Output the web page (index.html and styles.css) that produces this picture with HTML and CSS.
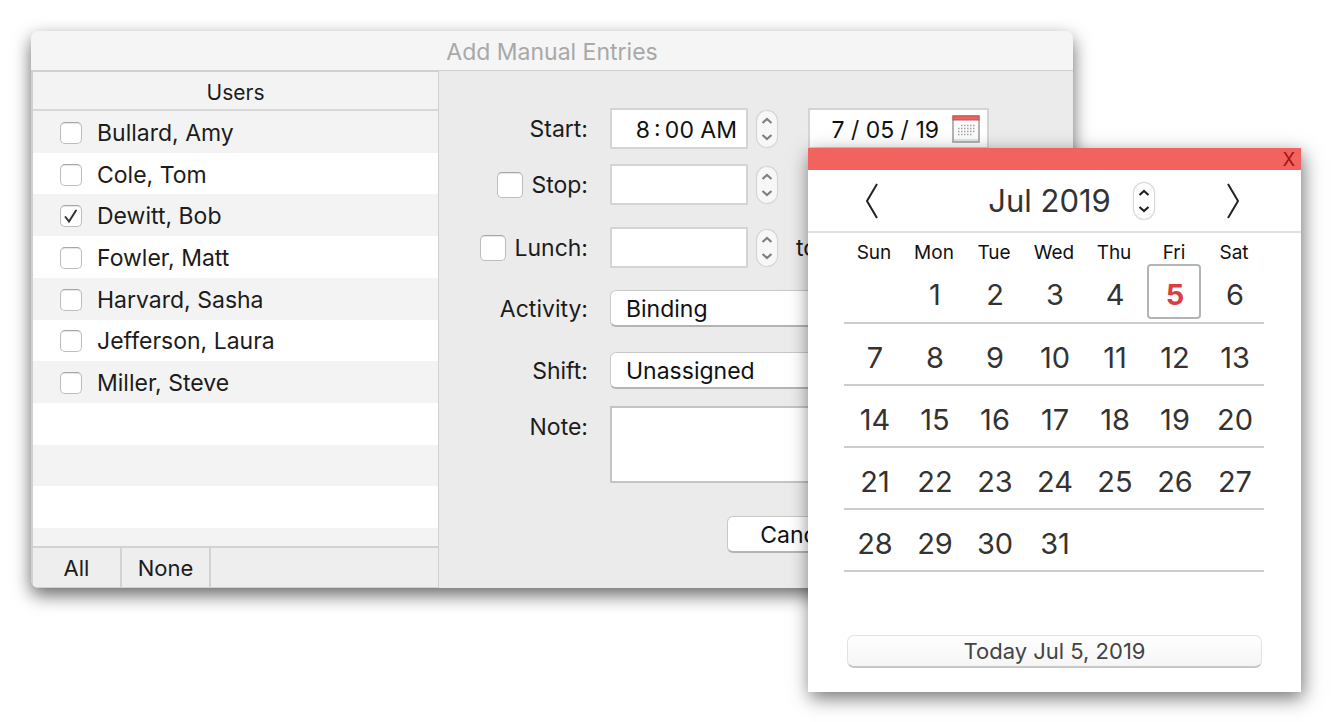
FILE: index.html
```html
<!DOCTYPE html>
<html lang="en">
  <head>
    <meta charset="UTF-8" />
    <meta name="viewport" content="width=device-width, initial-scale=1.0" />
    <title>Add Manual Entries</title>
    <link rel="stylesheet" href="styles.css" />
  </head>
  <body>
    <!-- shared arrows for every stepper -->
    <svg class="defs" width="0" height="0" aria-hidden="true">
      <symbol id="stepper-arrows" viewBox="0 0 20 36">
        <path d="M5.5 12 L10 8 L14.5 12 M5.5 24 L10 28 L14.5 24" />
      </symbol>
    </svg>

    <main class="window">
      <header class="titlebar"><h1>Add Manual Entries</h1></header>

      <div class="window-body">
        <!-- Users list -->
        <section class="users">
          <h2>Users</h2>
          <ul class="user-list">
            <li><label><input type="checkbox" class="check" />Bullard, Amy</label></li>
            <li><label><input type="checkbox" class="check" />Cole, Tom</label></li>
            <li><label><input type="checkbox" class="check" checked />Dewitt, Bob</label></li>
            <li><label><input type="checkbox" class="check" />Fowler, Matt</label></li>
            <li><label><input type="checkbox" class="check" />Harvard, Sasha</label></li>
            <li><label><input type="checkbox" class="check" />Jefferson, Laura</label></li>
            <li><label><input type="checkbox" class="check" />Miller, Steve</label></li>
            <li></li>
            <li></li>
            <li></li>
            <li></li>
          </ul>
          <div class="users-footer">
            <button type="button">All</button>
            <button type="button">None</button>
          </div>
        </section>

        <!-- Entry form -->
        <form class="entry">
          <div class="row row-start">
            <label class="row-label" for="start">Start:</label>
            <input class="field time" id="start" type="text" value="8&thinsp;:&thinsp;00 AM" />
            <button type="button" class="stepper" aria-label="Change start time"><svg><use href="#stepper-arrows" /></svg></button>
            <div class="field date">
              <input type="text" value="7 / 05 / 19" aria-label="Date" />
              <button type="button" class="date-button" aria-label="Open calendar">
                <svg width="28" height="28" viewBox="0 0 28 28">
                  <rect x="1" y="1" width="26" height="26" fill="#fcfcfc" stroke="#9a9a9a" stroke-width="1.5" />
                  <rect x="1" y="1" width="26" height="4" fill="#ea6460" stroke="#c25352" />
                  <path d="M2 25 H26" stroke="#dce8ea" stroke-width="2" />
                  <path d="M9 10.5 H23 M6 13.5 H23 M6 16.5 H23 M6 19.5 H20" stroke="#a4a4a4" stroke-width="1.4" stroke-dasharray="1.5 1.5" />
                </svg>
              </button>
            </div>
          </div>
          <div class="row">
            <label class="row-label"><input type="checkbox" class="check large" />Stop:</label>
            <input class="field time" type="text" aria-label="Stop time" />
            <button type="button" class="stepper" aria-label="Change stop time"><svg><use href="#stepper-arrows" /></svg></button>
          </div>
          <div class="row">
            <label class="row-label"><input type="checkbox" class="check large" />Lunch:</label>
            <input class="field time" type="text" aria-label="Lunch start" />
            <button type="button" class="stepper" aria-label="Change lunch start"><svg><use href="#stepper-arrows" /></svg></button>
            <span class="to">to</span>
            <input class="field time" type="text" aria-label="Lunch end" />
          </div>
          <div class="row row-activity">
            <label class="row-label" for="activity">Activity:</label>
            <select id="activity"><option>Binding</option></select>
          </div>
          <div class="row row-shift">
            <label class="row-label" for="shift">Shift:</label>
            <select id="shift"><option>Unassigned</option></select>
          </div>
          <div class="row row-note">
            <label class="row-label" for="note">Note:</label>
            <textarea id="note"></textarea>
          </div>
          <div class="actions">
            <button type="button">Cancel</button>
          </div>
        </form>
      </div>
    </main>

    <!-- Date picker, floats over the window -->
    <aside class="calendar" aria-label="Choose a date">
      <div class="calendar-bar"><button type="button" aria-label="Close">X</button></div>
      <div class="calendar-nav">
        <button type="button" class="arrow" aria-label="Previous month">
          <svg width="13" height="36" viewBox="0 0 13 36"><path d="M12 1 L2 18 L12 35" /></svg>
        </button>
        <h2>Jul 2019</h2>
        <div class="nav-end">
          <button type="button" class="stepper" aria-label="Change month"><svg><use href="#stepper-arrows" /></svg></button>
          <button type="button" class="arrow" aria-label="Next month">
            <svg width="13" height="36" viewBox="0 0 13 36"><path d="M1 1 L11 18 L1 35" /></svg>
          </button>
        </div>
      </div>
      <table class="days">
        <thead>
          <tr><th>Sun</th><th>Mon</th><th>Tue</th><th>Wed</th><th>Thu</th><th>Fri</th><th>Sat</th></tr>
        </thead>
        <tbody>
          <tr>
            <td></td>
            <td><button type="button">1</button></td>
            <td><button type="button">2</button></td>
            <td><button type="button">3</button></td>
            <td><button type="button">4</button></td>
            <td><button type="button" class="selected">5</button></td>
            <td><button type="button">6</button></td>
          </tr>
          <tr>
            <td><button type="button">7</button></td>
            <td><button type="button">8</button></td>
            <td><button type="button">9</button></td>
            <td><button type="button">10</button></td>
            <td><button type="button">11</button></td>
            <td><button type="button">12</button></td>
            <td><button type="button">13</button></td>
          </tr>
          <tr>
            <td><button type="button">14</button></td>
            <td><button type="button">15</button></td>
            <td><button type="button">16</button></td>
            <td><button type="button">17</button></td>
            <td><button type="button">18</button></td>
            <td><button type="button">19</button></td>
            <td><button type="button">20</button></td>
          </tr>
          <tr>
            <td><button type="button">21</button></td>
            <td><button type="button">22</button></td>
            <td><button type="button">23</button></td>
            <td><button type="button">24</button></td>
            <td><button type="button">25</button></td>
            <td><button type="button">26</button></td>
            <td><button type="button">27</button></td>
          </tr>
          <tr>
            <td><button type="button">28</button></td>
            <td><button type="button">29</button></td>
            <td><button type="button">30</button></td>
            <td><button type="button">31</button></td>
            <td></td>
            <td></td>
            <td></td>
          </tr>
        </tbody>
      </table>
      <button type="button" class="today">Today Jul 5, 2019</button>
    </aside>
  </body>
</html>
```
FILE: styles.css
```css
* {
  box-sizing: border-box;
}

body {
  min-height: 100vh;
  margin: 0;
  padding: 31px 260px 31px 31px;
  background: #fff;
  color: #1c1c1c;
  font-family: Inter, "Liberation Sans", sans-serif;
  font-size: 23px;
  line-height: 28px;
}

h1,
h2 {
  margin: 0;
  font-weight: 400;
}

button,
input,
select,
textarea {
  margin: 0;
  padding: 0;
  border: 0;
  border-radius: 0;
  background: none;
  color: inherit;
  font: inherit;
}

.defs {
  position: absolute;
}

/* Window */
.window {
  border-radius: 8px;
  overflow: hidden;
  background: #ebebeb;
  box-shadow: 0 7px 18px rgba(0, 0, 0, 0.6);
}

.titlebar {
  height: 40px;
  border-bottom: 1px solid #d0d0d0;
  background: #f5f5f5;
}

.titlebar h1 {
  color: #a8a8a8;
  font-size: 23px;
  line-height: 42px;
  text-align: center;
}

.window-body {
  display: flex;
}

/* Users */
.users {
  display: flex;
  flex-direction: column;
  flex: 0 0 408px;
  border: 1px solid #d0d0d0;
  border-left-width: 2px;
  border-bottom-left-radius: 8px;
  background: #fff;
}

.users h2 {
  height: 39px;
  border-bottom: 2px solid #d8d8d8;
  background: #f3f3f3;
  font-size: 21px;
  line-height: 42px;
  text-align: center;
}

.user-list {
  display: grid;
  grid-template-rows: repeat(10, 1fr) 18px;
  flex: 1;
  margin: 0;
  padding: 0;
  list-style: none;
}

.user-list li:nth-child(odd) {
  background: #f3f3f3;
}

.user-list label {
  display: flex;
  align-items: center;
  gap: 15px;
  height: 100%;
  padding: 2px 0 0 27px;
}

.check {
  flex: none;
  width: 22px;
  height: 22px;
  appearance: none;
  border: 1px solid #bdbdbd;
  border-top-color: #a6a6a6;
  border-radius: 5px;
  background: #fff;
  box-shadow: inset 0 1px 1px rgba(0, 0, 0, 0.1);
}

.check:checked {
  background: #fff url("data:image/svg+xml,%3Csvg xmlns='http://www.w3.org/2000/svg' viewBox='0 0 20 20'%3E%3Cpath d='M4.5 11 L8 15.5 L15 4.5' fill='none' stroke='%23333' stroke-width='2' stroke-linecap='round'/%3E%3C/svg%3E");
}

.check.large {
  width: 26px;
  height: 26px;
}

.users-footer {
  display: flex;
  height: 41px;
  border-top: 2px solid #d2d2d2;
  background: #eee;
}

.users-footer button {
  width: 89px;
  border-right: 2px solid #d2d2d2;
  font-size: 22px;
}

/* Form */
.entry {
  flex: 1;
  padding: 37px 84px 35px 0;
}

.row {
  display: flex;
  align-items: center;
  margin-bottom: 22px;
}

.row-start {
  margin-bottom: 15px;
}

.row-label {
  display: flex;
  align-items: center;
  justify-content: flex-end;
  gap: 8px;
  flex: 0 0 149px;
  margin-right: 22px;
  padding-top: 1px;
}

.field {
  height: 41px;
  border: 2px solid #d4d4d4;
  background: #fff;
  color: #111;
}

.time {
  flex: none;
  width: 138px;
  padding: 2px 9px 0 0;
  text-align: right;
}

.stepper {
  flex: none;
  width: 20px;
  height: 36px;
  margin-left: 9px;
  border-radius: 10px;
  background: #f7f7f7;
  box-shadow: 0 0 1px 1px #d2d2d2;
}

.stepper svg {
  display: block;
  width: 20px;
  height: 36px;
  fill: none;
  stroke: #808080;
  stroke-width: 2.2;
}

.date {
  display: flex;
  align-items: center;
  justify-content: space-between;
  width: 181px;
  margin-left: 31px;
  padding: 0 7px 0 12px;
}

.date input {
  width: 117px;
  padding-top: 2px;
  text-align: right;
}

.date-button,
.date-button svg {
  display: block;
}

.to {
  margin: 0 10px 0 19px;
}

.entry select,
.actions button {
  height: 37px;
  appearance: none;
  border: 1px solid #c8c8c8;
  border-bottom: 2px solid #b4b4b4;
  border-radius: 6px;
  background: #fff;
  color: #111;
}

.entry select {
  flex: 1;
  padding: 2px 15px 0;
}

.row-activity {
  margin-bottom: 25px;
}

.row-shift {
  margin-bottom: 17px;
}

.row-note {
  align-items: flex-start;
  margin-bottom: 33px;
}

.row-note .row-label {
  padding-top: 7px;
}

.entry textarea {
  flex: 1;
  height: 77px;
  border: 2px solid #c4c4c4;
  background: #fff;
  resize: none;
}

.actions {
  display: flex;
  justify-content: flex-end;
  padding-right: 120px;
}

.actions button {
  width: 142px;
  padding-top: 2px;
}

/* Calendar */
.calendar {
  position: absolute;
  top: 148px;
  right: 32px;
  width: 493px;
  padding-bottom: 24px;
  background: #fff;
  box-shadow: 2px 6px 18px rgba(0, 0, 0, 0.55);
}

.calendar-bar {
  height: 22px;
  padding-right: 6px;
  background: #f2625f;
  text-align: right;
}

.calendar-bar button {
  display: inline-block;
  color: #a01410;
  font-size: 18px;
  line-height: 24px;
  vertical-align: top;
}

.calendar-nav {
  display: grid;
  grid-template-columns: 1fr auto 1fr;
  align-items: center;
  height: 63px;
  padding: 0 61px 0 57px;
  border-bottom: 2px solid #e0e0e0;
}

.calendar-nav h2 {
  margin-right: 6px;
  color: #333;
  font-size: 31px;
  line-height: 38px;
}

.arrow {
  width: 13px;
  height: 36px;
}

.arrow svg {
  display: block;
  fill: none;
  stroke: #222;
  stroke-width: 2;
}

.nav-end {
  display: flex;
  align-items: center;
  justify-content: space-between;
}

.nav-end .stepper {
  margin-left: 17px;
  background: #fff;
}

.nav-end .stepper svg {
  stroke: #222;
}

.days {
  width: 420px;
  margin-left: 36px;
  border-collapse: collapse;
  table-layout: fixed;
}

.days th {
  height: 28px;
  padding: 11px 0 0;
  color: #111;
  font-size: 19px;
  font-weight: 400;
  line-height: 17px;
}

.days td {
  height: 62px;
  padding: 0;
  border-bottom: 2px solid #ccc;
  text-align: center;
}

.days td button {
  width: 54px;
  height: 55px;
  padding: 7px 0 0 2px;
  border-radius: 4px;
  color: #333;
  font-size: 29px;
  vertical-align: top;
}

.days td .selected {
  border: 2px solid #b4b4b4;
  color: #d93f40;
  font-weight: 700;
}

.today {
  display: block;
  width: 415px;
  height: 33px;
  margin: 63px auto 0;
  border: 1px solid #e2e2e2;
  border-bottom: 2px solid #c8c8c8;
  border-radius: 7px;
  background: linear-gradient(#fff, #f5f5f5);
  color: #444;
  font-size: 22px;
  line-height: 30px;
}
```
